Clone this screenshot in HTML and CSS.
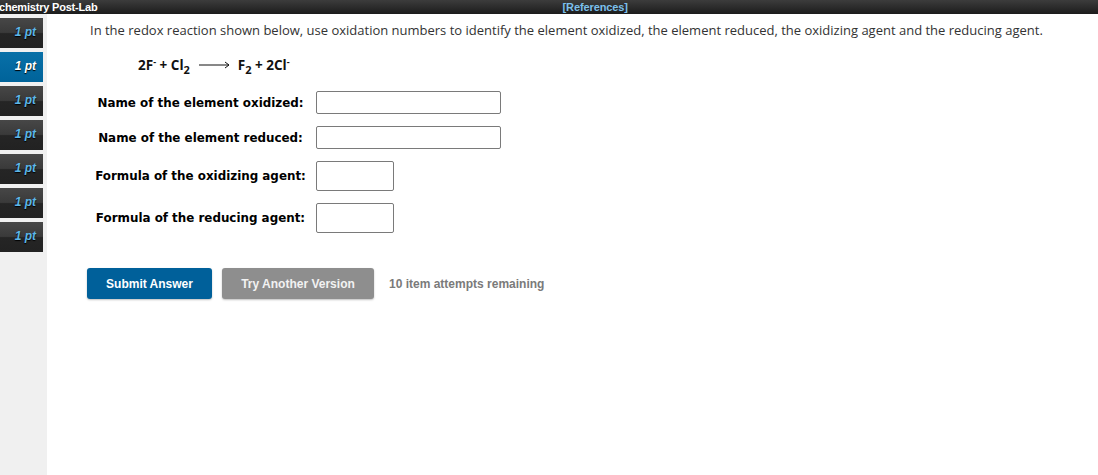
FILE: index.html
```html
<!DOCTYPE html>
<html>
<head>
<meta charset="utf-8">
<link rel="stylesheet" href="styles.css">
</head>
<body>
<div class="topbar">
  <span class="title">chemistry Post-Lab</span>
  <span class="refs">[References]</span>
</div>
<div class="main">
  <div class="sidebar">
    <div class="tab">1 pt</div>
    <div class="tab active">1 pt</div>
    <div class="tab">1 pt</div>
    <div class="tab">1 pt</div>
    <div class="tab">1 pt</div>
    <div class="tab">1 pt</div>
    <div class="tab">1 pt</div>
  </div>
  <div class="content">
    <p class="question">In the redox reaction shown below, use oxidation numbers to identify the element oxidized, the element reduced, the oxidizing agent and the reducing agent.</p>
    <div class="equation">2F<sup>-</sup> + Cl<sub>2</sub><svg class="arrow" width="31" height="8" viewBox="0 0 31 8"><path d="M0 4H30M26 1L30 4L26 7" fill="none" stroke="#111" stroke-width="1"/></svg>F<sub>2</sub> + 2Cl<sup>-</sup></div>
    <div class="form">
      <label class="lbl">Name of the element oxidized:</label>
      <div class="field wide"></div>
      <label class="lbl">Name of the element reduced:</label>
      <div class="field wide"></div>
      <label class="lbl">Formula of the oxidizing agent:</label>
      <div class="field small"></div>
      <label class="lbl">Formula of the reducing agent:</label>
      <div class="field small"></div>
    </div>
    <div class="actions">
      <button class="btn submit">Submit Answer</button>
      <button class="btn another">Try Another Version</button>
      <span class="remaining">10 item attempts remaining</span>
    </div>
  </div>
</div>
</body>
</html>
```
FILE: styles.css
```css
html, body {
  margin: 0;
  padding: 0;
  background: #ffffff;
  height: 100%;
  overflow: hidden;
}
body {
  font-family: "Liberation Sans", Arial, sans-serif;
}
.topbar {
  height: 14px;
  background: linear-gradient(#3c3c3c, #1c1c1c);
  display: flex;
  align-items: center;
  font-family: "Liberation Sans", Arial, sans-serif;
  font-weight: bold;
  font-size: 11px;
  line-height: 14px;
  white-space: nowrap;
}
.title {
  color: #ffffff;
  margin-left: -1px;
  letter-spacing: -0.2px;
}
.refs {
  color: #7cc0ec;
  margin-left: 465px;
  letter-spacing: -0.1px;
}
.main {
  display: flex;
  height: 461px;
}
.sidebar {
  width: 47px;
  background: #f0f0f0;
  padding-top: 4px;
  box-sizing: border-box;
  flex: none;
}
.tab {
  width: 43px;
  height: 30px;
  margin-bottom: 4px;
  background: linear-gradient(#474747 0%, #3a3a3a 48%, #252525 52%, #222222 100%);
  color: #5cb6e8;
  font-weight: bold;
  font-style: italic;
  font-size: 12px;
  line-height: 29px;
  text-align: right;
  padding-right: 7px;
  box-sizing: border-box;
  text-shadow: 0 1px 1px #000;
}
.tab.active {
  background: linear-gradient(#0870a8, #00639a);
  color: #ffffff;
}
.content {
  flex: 1;
  padding-left: 43px;
  padding-top: 7px;
}
.question {
  margin: 0;
  font-family: "Open Sans", sans-serif;
  font-size: 13px;
  line-height: 18px;
  color: #333333;
}
.equation {
  margin-top: 17px;
  margin-left: 48px;
  font-family: "Open Sans", sans-serif;
  font-weight: bold;
  font-size: 13.5px;
  line-height: 18px;
  color: #111111;
  white-space: nowrap;
}
.equation sub {
  font-size: 11px;
  vertical-align: -4px;
  line-height: 0;
}
.equation sup {
  font-size: 9px;
  vertical-align: 5px;
  line-height: 0;
}
.arrow {
  margin: 0 8px 0 9px;
  vertical-align: 1px;
}
.form {
  margin-top: 17px;
  margin-left: 2px;
  display: grid;
  grid-template-columns: 217px auto;
  column-gap: 7px;
  row-gap: 12px;
  align-items: center;
  justify-items: start;
}
.lbl {
  justify-self: stretch;
  text-align: center;
  font-family: "DejaVu Sans", Verdana, sans-serif;
  font-weight: bold;
  font-size: 11.9px;
  color: #000000;
  white-space: nowrap;
}
.field {
  border: 1px solid #7a7a7a;
  border-radius: 2px;
  background: #ffffff;
  box-sizing: border-box;
}
.field.wide {
  width: 185px;
  height: 23px;
}
.field.small {
  width: 78px;
  height: 30px;
}
.actions {
  margin-top: 35px;
  margin-left: -3px;
  display: flex;
  align-items: center;
}
.btn {
  height: 31px;
  border: none;
  border-radius: 3px;
  font-family: "Liberation Sans", Arial, sans-serif;
  font-weight: bold;
  font-size: 12px;
  padding: 0;
  box-shadow: 0 1px 2px rgba(0,0,0,0.25);
}
.submit {
  width: 125px;
  background: #00609a;
  color: #ffffff;
}
.another {
  width: 152px;
  margin-left: 10px;
  background: #8e8e8e;
  color: #f2f2f2;
}
.remaining {
  margin-left: 15px;
  font-weight: bold;
  font-size: 12px;
  color: #7a7a7a;
}
```
